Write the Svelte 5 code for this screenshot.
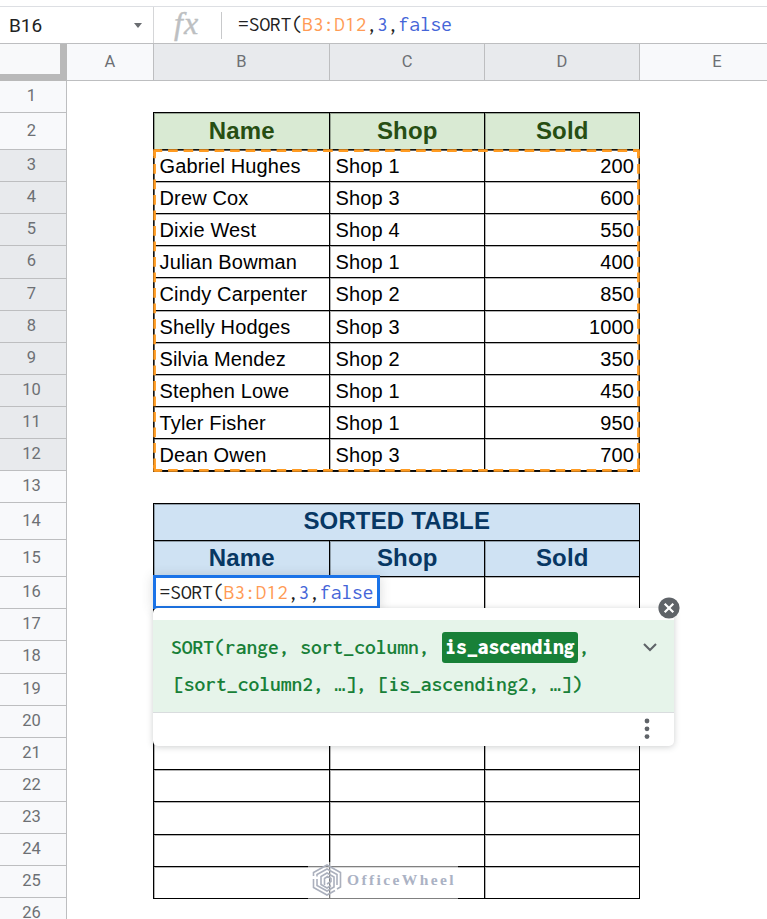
<script lang="ts">
  const columns = [
    { id: 'A', selected: false },
    { id: 'B', selected: true },
    { id: 'C', selected: true },
    { id: 'D', selected: true },
    { id: 'E', selected: false },
  ];

  const sales: [string, string, number][] = [
    ['Gabriel Hughes', 'Shop 1', 200],
    ['Drew Cox', 'Shop 3', 600],
    ['Dixie West', 'Shop 4', 550],
    ['Julian Bowman', 'Shop 1', 400],
    ['Cindy Carpenter', 'Shop 2', 850],
    ['Shelly Hodges', 'Shop 3', 1000],
    ['Silvia Mendez', 'Shop 2', 350],
    ['Stephen Lowe', 'Shop 1', 450],
    ['Tyler Fisher', 'Shop 1', 950],
    ['Dean Owen', 'Shop 3', 700],
  ];

  const headings = ['Name', 'Shop', 'Sold'];
  const rowNumbers = Array.from({ length: 26 }, (_, i) => i + 1);
  const emptyRows = Array.from({ length: 10 }, (_, i) => i);

  const isTall = (n: number) => n === 2 || n === 14 || n === 15;
  const isSelected = (n: number) => n >= 3 && n <= 12;
</script>

{#snippet formula()}
  <span class="mono">=SORT(<span class="range">B3:D12</span>,<span class="value">3</span>,<span class="value">false</span></span>
{/snippet}

<div class="app">
  <div class="formula-bar">
    <div class="name-box">
      <span>B16</span>
      <svg width="8" height="5" viewBox="0 0 8 5"><path d="M0 0h8L4 5z" fill="#6a6d71" /></svg>
    </div>
    <span class="fx">fx</span>
    <div class="formula">{@render formula()}</div>
  </div>

  <div class="column-heads">
    <div class="corner"></div>
    {#each columns as column}
      <div class="column-head col-{column.id.toLowerCase()}" class:selected={column.selected}>{column.id}</div>
    {/each}
  </div>

  <div class="sheet">
    <div class="row-heads">
      {#each rowNumbers as n}
        <div class="row-head" class:tall={isTall(n)} class:selected={isSelected(n)}>{n}</div>
      {/each}
    </div>

    <div class="cells">
      <div class="table source">
        {#each headings as heading}
          <div class="cell heading">{heading}</div>
        {/each}
        {#each sales as [name, shop, sold]}
          <div class="cell">{name}</div>
          <div class="cell">{shop}</div>
          <div class="cell number">{sold}</div>
        {/each}
        <svg class="ants" width="487" height="323" viewBox="0 0 487 323">
          <rect x="0.75" y="0.75" width="485.5" height="321.5" fill="none" stroke="#111" stroke-width="1.5" />
          <g fill="none" stroke="#ff9b21" stroke-width="2.6">
            <path
              d="M1.6 1.6H485.4M1.6 321.4H485.4M1.6 1.6V321.4M485.4 1.6V321.4"
              stroke-dasharray="9.6 5.9"
              stroke-dashoffset="2"
            />
            <path d="M1.6 7V1.6H7M480 1.6h5.4V7M1.6 316v5.4H7M480 321.4h5.4V316" />
          </g>
        </svg>
      </div>

      <div class="table sorted">
        <div class="cell heading title">SORTED TABLE</div>
        {#each headings as heading}
          <div class="cell heading">{heading}</div>
        {/each}
        {#each emptyRows as row}
          <div class="cell"></div>
          <div class="cell"></div>
          <div class="cell"></div>
        {/each}

        <div class="editor">{@render formula()}</div>

        <div class="hint">
          <div class="signature">
            <div class="line mono">SORT(range, sort_column, <b class="active">is_ascending</b>,</div>
            <div class="line mono second">[sort_column2, <span class="dots">…</span>], [is_ascending2, <span class="dots">…</span>])</div>
            <svg class="chevron" width="16" height="10" viewBox="0 0 16 10">
              <path d="M2 2l6 6 6-6" fill="none" stroke="#5f6368" stroke-width="2.1" />
            </svg>
          </div>
          <div class="hint-footer">
            <svg width="6" height="22" viewBox="0 0 6 22" fill="#5f6368">
              <circle cx="3" cy="3" r="2.4" />
              <circle cx="3" cy="10.8" r="2.4" />
              <circle cx="3" cy="18.6" r="2.4" />
            </svg>
          </div>
          <svg class="close" width="22" height="22" viewBox="0 0 22 22">
            <circle cx="11" cy="11" r="10.6" fill="#5f6368" />
            <path d="M6.7 6.7l8.6 8.6M15.3 6.7l-8.6 8.6" stroke="#fff" stroke-width="2.2" />
          </svg>
        </div>

        <div class="watermark">
          <svg width="30" height="32" viewBox="0 0 30 32" fill="none" stroke="#abb0bd" stroke-width="1.6">
            <path d="M1.5 12V8.5L15 1l13.5 7.5V23L25 25" />
            <path d="M1.5 15v8.5L15 31l8-4.5" />
            <path d="M5 12.5v-2L15 5l10 5.5V21" />
            <path d="M5 15v6.5l10 5.5 7-4v-10l-7-4-6 3.5v8l6 3.5 4-2.5" />
            <path d="M12.5 21v-6.5l3-2 3.5 2v3l-4 2.5" />
          </svg>
          <span>OfficeWheel</span>
        </div>
      </div>
    </div>
  </div>
</div>

<style>
  :global(body) {
    margin: 0;
    overflow: hidden;
  }

  .app {
    --row: 32.15px;
    --tall: 36.8px;
    --line: #bdbec0;
    box-sizing: border-box;
    width: 767px;
    height: 919px;
    padding-top: 6px;
    overflow: hidden;
    background: #fff;
    font-family: 'Liberation Sans', Arial, sans-serif;
    color: #000;
  }

  .app * {
    box-sizing: border-box;
  }

  .mono {
    font-family: Inconsolata, 'Noto Sans Mono CJK SC', 'Liberation Mono', monospace;
    font-size: 21.4px;
    white-space: pre;
  }

  .range {
    color: #ff9b55;
  }

  .value {
    color: #4565d8;
  }

  .formula-bar {
    display: flex;
    align-items: center;
    height: 38px;
    border-top: 1px solid #dddfe3;
    border-bottom: 1px solid var(--line);
  }

  .name-box {
    display: flex;
    align-items: center;
    justify-content: space-between;
    width: 154px;
    height: 100%;
    padding: 1px 11px 0 9px;
    border-right: 1px solid #d5d6d8;
    font-family: Roboto, sans-serif;
    font-size: 19px;
    color: #222;
  }

  .fx {
    width: 68px;
    height: 27px;
    padding-left: 20px;
    border-right: 1px solid #c8c9cb;
    font-family: 'Liberation Serif', serif;
    font-size: 32px;
    font-style: italic;
    line-height: 22px;
    letter-spacing: 1px;
    color: #bdbfc2;
    -webkit-text-stroke: 0.4px #bdbfc2;
  }

  .formula {
    padding-left: 16px;
    line-height: 37px;
    color: #222;
  }

  .column-heads {
    display: flex;
    height: 37px;
  }

  .corner {
    flex: none;
    width: 67px;
    border-right: 7px solid #b9b9b9;
    border-bottom: 7px solid #b9b9b9;
    background: #f8f9fa;
  }

  .column-head {
    flex: none;
    width: 155px;
    border-right: 1px solid var(--line);
    border-bottom: 1px solid var(--line);
    background: #f8f9fb;
    font-family: Roboto, sans-serif;
    font-size: 16.5px;
    line-height: 36px;
    text-align: center;
    color: #6d7074;
  }

  .column-head.selected,
  .row-head.selected {
    background: #e8eaed;
  }

  .column-head.col-a {
    width: 87px;
  }

  .column-head.col-b {
    width: 176px;
  }

  .sheet {
    display: flex;
  }

  .row-heads {
    flex: none;
    width: 67px;
    border-right: 1px solid var(--line);
  }

  .row-head {
    height: var(--row);
    padding-right: 3px;
    border-bottom: 1px solid var(--line);
    background: #f8f9fb;
    font-family: Roboto, sans-serif;
    font-size: 16.5px;
    line-height: 30px;
    text-align: center;
    color: #6d7074;
  }

  .row-head.tall {
    height: var(--tall);
    line-height: 36px;
  }

  .cells {
    padding: 31px 0 0 86px;
  }

  .table {
    position: relative;
    display: grid;
    grid-template-columns: 176px 155px 155px;
    width: 487px;
    border-top: 1px solid #000;
    border-left: 1px solid #000;
  }

  .source {
    grid-template-rows: var(--tall);
    grid-auto-rows: var(--row);
  }

  .sorted {
    grid-template-rows: var(--tall) var(--tall);
    grid-auto-rows: var(--row);
    margin-top: 31.6px;
  }

  .cell {
    padding: 0 5px 0 5.5px;
    border-right: 1px solid #000;
    border-bottom: 1px solid #000;
    box-shadow: inset 1px 1px rgba(0, 0, 0, 0.3);
    font-size: 20px;
    line-height: 33px;
    letter-spacing: 0.15px;
    white-space: nowrap;
  }

  .number {
    text-align: right;
  }

  .heading {
    background: #d9ead3;
    font-size: 24px;
    font-weight: bold;
    line-height: 36px;
    text-align: center;
    color: #274e13;
  }

  .sorted .heading {
    background: #cfe2f3;
    line-height: 34px;
    color: #073763;
  }

  .title {
    grid-column: 1 / -1;
  }

  .ants {
    position: absolute;
    top: 36px;
    left: -1px;
  }

  .editor {
    position: absolute;
    top: 71px;
    left: -1px;
    width: 227px;
    height: 34px;
    padding-left: 3.5px;
    border: 3px solid #1a73e8;
    background: #fff;
    box-shadow: 0 1px 12px rgba(60, 64, 67, 0.2);
    line-height: 28px;
    color: #222;
  }

  .hint {
    position: absolute;
    top: 104px;
    left: -1px;
    width: 521px;
    height: 138px;
    padding-top: 12px;
    border-radius: 5px;
    background: #fff;
    box-shadow: 0 1px 6px rgba(60, 64, 67, 0.25);
  }

  .signature {
    position: relative;
    height: 93px;
    padding: 9px 0 0 18px;
    border-bottom: 1px solid #d9dcde;
    background: #e6f4ea;
    color: #188038;
  }

  .line {
    height: 37px;
    font-size: 21.55px;
    font-weight: 600;
    line-height: 36px;
  }

  .second {
    padding-left: 2px;
  }

  .active {
    display: inline-block;
    height: 31px;
    margin: 3px 1px 0 2px;
    padding: 0 3px;
    border-radius: 3px;
    background: #188038;
    line-height: 30px;
    vertical-align: top;
    color: #fff;
  }

  .dots {
    display: inline-block;
    width: 10.7px;
    font-family: 'Liberation Mono', monospace;
    font-size: 17.8px;
    line-height: 20px;
  }

  .chevron {
    position: absolute;
    top: 22px;
    right: 16px;
  }

  .hint-footer {
    display: flex;
    justify-content: flex-end;
    padding: 5px 24px 0 0;
  }

  .close {
    position: absolute;
    top: -11px;
    right: -6px;
  }

  .watermark {
    position: absolute;
    bottom: 0;
    left: 154px;
    display: flex;
    align-items: center;
    width: 150px;
    height: 37px;
    padding-left: 4px;
    background: rgba(255, 255, 255, 0.5);
    font-family: 'Liberation Serif', serif;
    font-size: 15.5px;
    font-weight: bold;
    letter-spacing: 2.4px;
    color: #abb2c4;
  }

  .watermark span {
    padding-left: 5px;
  }
</style>
